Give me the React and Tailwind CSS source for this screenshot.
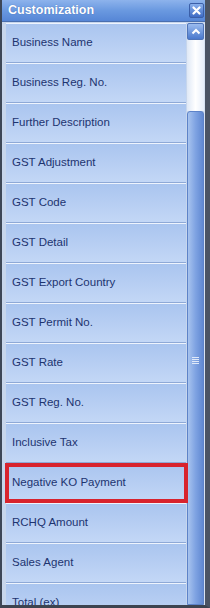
import React from "react";

const items = [
  "Business Name",
  "Business Reg. No.",
  "Further Description",
  "GST Adjustment",
  "GST Code",
  "GST Detail",
  "GST Export Country",
  "GST Permit No.",
  "GST Rate",
  "GST Reg. No.",
  "Inclusive Tax",
  "Negative KO Payment",
  "RCHQ Amount",
  "Sales Agent",
  "Total (ex)",
];

function Item({ label, marked }) {
  return (
    <div className="relative h-[40px] shrink-0 border-t border-t-[#eef4fd] border-b border-b-[#8ea9d6] bg-gradient-to-b from-[#aac5ef] to-[#c3d7f6] flex items-center pl-[6px]">
      <span className="text-[11.5px] text-[#1d3470]">{label}</span>
      {marked && (
        <div className="absolute -left-[1px] -right-[2px] -top-[1px] -bottom-[1px] border-[4px] border-[#d8232d]" />
      )}
    </div>
  );
}

export default function App() {
  return (
    <div
      className="w-[210px] h-[608px] overflow-hidden flex flex-col bg-[#c7d6ec] border-l-2 border-l-[#3d4757] border-r-[5px] border-r-[#4b5464] border-b-[3px] border-b-[#3d4450]"
      style={{ fontFamily: '"Liberation Sans", Arial, sans-serif' }}
    >
      <div className="h-[22px] shrink-0 flex items-center justify-between pl-[6px] pr-[1px] bg-gradient-to-b from-[#8db3ec] via-[#6a99e0] to-[#5686d6] border-b border-b-[#4a6fae]">
        <span className="text-[12.5px] font-bold text-white [text-shadow:0_0_1px_#3a64ad]">
          Customization
        </span>
        <div className="w-[15px] h-[15px] rounded-[2px] border border-[#3b5fa8] bg-gradient-to-b from-[#8ab0ec] to-[#3e6bc4] flex items-center justify-center">
          <svg width="9" height="9" viewBox="0 0 9 9">
            <path d="M1.5 1.5 L7.5 7.5 M7.5 1.5 L1.5 7.5" stroke="white" strokeWidth="2.2" strokeLinecap="round" />
          </svg>
        </div>
      </div>
      <div className="flex-1 flex min-h-0 pt-[1px]">
        <div className="w-[184px] pl-[4px] flex flex-col">
          {items.map((l) => (
            <Item key={l} label={l} marked={l === "Negative KO Payment"} />
          ))}
        </div>
        <div className="w-[17px] ml-[1px] flex flex-col">
          <div className="h-[17px] shrink-0 rounded-[2px] border border-[#4f74b8] bg-gradient-to-b from-[#9bbcef] to-[#4a78cc] flex items-center justify-center">
            <svg width="10" height="7" viewBox="0 0 10 7">
              <path d="M1.5 5.5 L5 2 L8.5 5.5" stroke="white" strokeWidth="2" fill="none" />
            </svg>
          </div>
          <div className="h-[71px] shrink-0 bg-gradient-to-r from-[#dfe8f6] via-white to-[#e6eefa]" />
          <div className="flex-1 rounded-t-[3px] border border-[#5d83c9] bg-gradient-to-r from-[#a7c3ee] via-[#7fa3e2] to-[#6189d2] flex flex-col items-center pt-[245px]">
            <div className="flex flex-col gap-[1px]">
              <div className="w-[7px] h-[1px] bg-[#dfe9f8]" />
              <div className="w-[7px] h-[1px] bg-[#dfe9f8]" />
              <div className="w-[7px] h-[1px] bg-[#dfe9f8]" />
              <div className="w-[7px] h-[1px] bg-[#dfe9f8]" />
            </div>
          </div>
        </div>
        <div className="w-[1px] bg-[#d7e2f2]" />
      </div>
    </div>
  );
}
